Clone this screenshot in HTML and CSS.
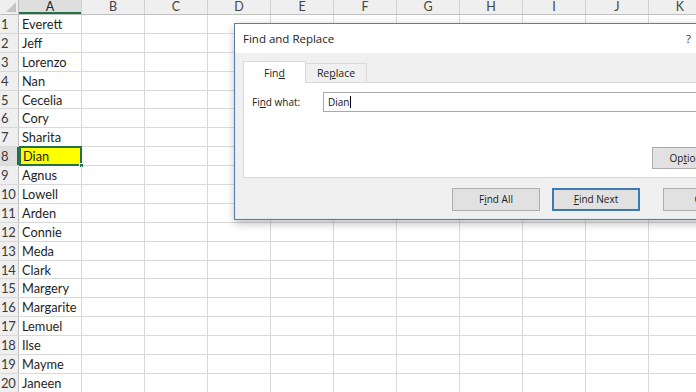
FILE: index.html
```html
<!DOCTYPE html>
<html>
<head>
<meta charset="utf-8">
<link rel="stylesheet" href="styles.css">
</head>
<body>
<div class="sheet">
  <div class="hrow">
    <div class="corner"><span class="tri"></span></div>
    <div class="ch sel">A</div><div class="ch">B</div><div class="ch">C</div><div class="ch">D</div><div class="ch">E</div><div class="ch">F</div><div class="ch">G</div><div class="ch">H</div><div class="ch">I</div><div class="ch">J</div><div class="ch">K</div>
  </div>
  <div class="row"><div class="rh">1</div><div class="ca">Everett</div><div class="rest"></div></div>
  <div class="row"><div class="rh">2</div><div class="ca">Jeff</div><div class="rest"></div></div>
  <div class="row"><div class="rh">3</div><div class="ca">Lorenzo</div><div class="rest"></div></div>
  <div class="row"><div class="rh">4</div><div class="ca">Nan</div><div class="rest"></div></div>
  <div class="row"><div class="rh">5</div><div class="ca">Cecelia</div><div class="rest"></div></div>
  <div class="row"><div class="rh">6</div><div class="ca">Cory</div><div class="rest"></div></div>
  <div class="row"><div class="rh">7</div><div class="ca">Sharita</div><div class="rest"></div></div>
  <div class="row"><div class="rh rsel">8</div><div class="ca active">Dian<span class="handle"></span></div><div class="rest"></div></div>
  <div class="row"><div class="rh">9</div><div class="ca">Agnus</div><div class="rest"></div></div>
  <div class="row"><div class="rh">10</div><div class="ca">Lowell</div><div class="rest"></div></div>
  <div class="row"><div class="rh">11</div><div class="ca">Arden</div><div class="rest"></div></div>
  <div class="row"><div class="rh">12</div><div class="ca">Connie</div><div class="rest"></div></div>
  <div class="row"><div class="rh">13</div><div class="ca">Meda</div><div class="rest"></div></div>
  <div class="row"><div class="rh">14</div><div class="ca">Clark</div><div class="rest"></div></div>
  <div class="row"><div class="rh">15</div><div class="ca">Margery</div><div class="rest"></div></div>
  <div class="row"><div class="rh">16</div><div class="ca">Margarite</div><div class="rest"></div></div>
  <div class="row"><div class="rh">17</div><div class="ca">Lemuel</div><div class="rest"></div></div>
  <div class="row"><div class="rh">18</div><div class="ca">Ilse</div><div class="rest"></div></div>
  <div class="row"><div class="rh">19</div><div class="ca">Mayme</div><div class="rest"></div></div>
  <div class="row"><div class="rh">20</div><div class="ca">Janeen</div><div class="rest"></div></div>
</div>

<div class="dialog">
  <div class="titlebar"><span class="title">Find and Replace</span><span class="help">?</span></div>
  <div class="dbody">
    <div class="tabs">
      <div class="tab on">Fin<u>d</u></div>
      <div class="tab">Re<u>p</u>lace</div>
    </div>
    <div class="panel">
      <div class="findrow">
        <span class="lbl">Fi<u>n</u>d what:</span>
        <div class="input">Dian<span class="caret"></span></div>
      </div>
      <div class="optrow">
        <div class="btn opt">Op<u>t</u>ions &gt;&gt;</div>
      </div>
    </div>
    <div class="footer">
      <div class="btn">F<u>i</u>nd All</div>
      <div class="btn primary"><u>F</u>ind Next</div>
      <div class="btn close">Close</div>
    </div>
  </div>
</div>
</body>
</html>
```
FILE: styles.css
```css
html, body {
  margin: 0;
  padding: 0;
}
body {
  width: 696px;
  height: 392px;
  overflow: hidden;
  position: relative;
  background: #ffffff;
  font-family: Lato, "Open Sans", sans-serif;
}
.sheet {
  display: flex;
  flex-direction: column;
}
.hrow {
  display: flex;
  height: 15px;
  background: #efefef;
  border-bottom: 1px solid #bfbfbf;
  box-sizing: border-box;
}
.corner {
  width: 19px;
  flex: none;
  border-right: 1px solid #bfbfbf;
  box-sizing: border-box;
  position: relative;
}
.tri {
  position: absolute;
  right: 2px;
  bottom: 2px;
  width: 0;
  height: 0;
  border-left: 10px solid transparent;
  border-bottom: 10px solid #c4c4c4;
}
.ch {
  width: 63px;
  flex: none;
  box-sizing: border-box;
  border-right: 1px solid #d0d0d0;
  text-align: center;
  font-size: 12.5px;
  line-height: 14px;
  color: #444;
}
.ch.sel {
  background: #dedede;
  box-shadow: inset 0 -2px 0 #217346;
  color: #222;
}
.row {
  display: flex;
  height: 18.9px;
  box-sizing: border-box;
  border-bottom: 1px solid #d9d9d9;
}
.rh {
  width: 19px;
  flex: none;
  box-sizing: border-box;
  background: #efefef;
  border-right: 1px solid #bfbfbf;
  font-size: 13px;
  line-height: 18px;
  padding-left: 1px;
  color: #3a3a3a;
  letter-spacing: -0.3px;
  white-space: nowrap;
  overflow: hidden;
}
.rh.rsel {
  background: #dedede;
  border-right: 2px solid #217346;
}
.ca {
  width: 63px;
  flex: none;
  box-sizing: border-box;
  border-right: 1px solid #d9d9d9;
  font-size: 12.8px;
  line-height: 18px;
  padding-left: 3px;
  color: #1e1e1e;
  position: relative;
}
.ca.active {
  background: #ffff00;
  border: 2px solid #217346;
  margin-top: -1px;
  height: 19.9px;
  padding-left: 2px;
  line-height: 16px;
}
.handle {
  position: absolute;
  right: -4px;
  bottom: -4px;
  width: 5px;
  height: 5px;
  background: #217346;
  border: 1px solid #fff;
  box-sizing: border-box;
}
.rest {
  flex: 1;
  background: repeating-linear-gradient(to right, transparent 0, transparent 62px, #d9d9d9 62px, #d9d9d9 63px);
}

.dialog {
  position: absolute;
  left: 234px;
  top: 23px;
  width: 530px;
  height: 197px;
  box-sizing: border-box;
  border: 1px solid #5b7ea6;
  background: #f0f0f0;
  box-shadow: inset 0 0 0 1px #dbe8f5, 1px 3px 9px rgba(0, 0, 0, 0.28);
  display: flex;
  flex-direction: column;
  font-family: "Open Sans", "Noto Sans", sans-serif;
  color: #1a1a1a;
}
.titlebar {
  height: 29px;
  flex: none;
  background: #ffffff;
  display: flex;
  align-items: center;
  justify-content: space-between;
  padding: 0 72px 0 8px;
}
.title {
  font-size: 11.5px;
  color: #222;
}
.help {
  font-size: 11.5px;
  color: #333;
}
.dbody {
  flex: 1;
  display: flex;
  flex-direction: column;
  padding: 8px 0 0 8px;
}
.tabs {
  display: flex;
  align-items: flex-end;
  height: 21px;
  position: relative;
  z-index: 1;
}
.tab {
  font-size: 10.5px;
  box-sizing: border-box;
  border: 1px solid #d9d9d9;
  border-bottom: none;
  text-align: center;
  color: #222;
}
.tab.on {
  width: 63px;
  height: 22px;
  line-height: 22px;
  background: #ffffff;
  margin-bottom: -1px;
}
.tab:not(.on) {
  width: 61px;
  height: 19px;
  line-height: 18px;
  background: #f0f0f0;
  border-left: none;
}
.panel {
  height: 96px;
  flex: none;
  box-sizing: border-box;
  background: #ffffff;
  border: 1px solid #d9d9d9;
  border-right: none;
  padding: 9px 0 0 8px;
  display: flex;
  flex-direction: column;
}
.findrow {
  display: flex;
  align-items: center;
  height: 20px;
}
.lbl {
  width: 71px;
  font-size: 10px;
  color: #222;
}
.input {
  width: 420px;
  height: 20px;
  box-sizing: border-box;
  border: 1px solid #a8a8a8;
  font-size: 10px;
  line-height: 18px;
  padding-left: 4px;
  color: #111;
  display: flex;
  align-items: center;
}
.caret {
  display: inline-block;
  width: 1px;
  height: 12px;
  background: #000;
  margin-left: 1px;
}
.optrow {
  display: flex;
  margin-top: 35px;
  padding-left: 400px;
}
.btn {
  width: 88px;
  height: 23px;
  box-sizing: border-box;
  border: 1px solid #adadad;
  background: #e1e1e1;
  font-size: 10px;
  line-height: 21px;
  text-align: center;
  color: #222;
  flex: none;
}
.btn.opt {
  height: 22px;
  line-height: 20px;
  width: 86px;
}
.footer {
  display: flex;
  padding: 10px 0 0 209px;
}
.btn.primary {
  margin-left: 12px;
  border: 2px solid #3a7bb5;
  line-height: 19px;
}
.btn.close {
  margin-left: 23px;
}
```
